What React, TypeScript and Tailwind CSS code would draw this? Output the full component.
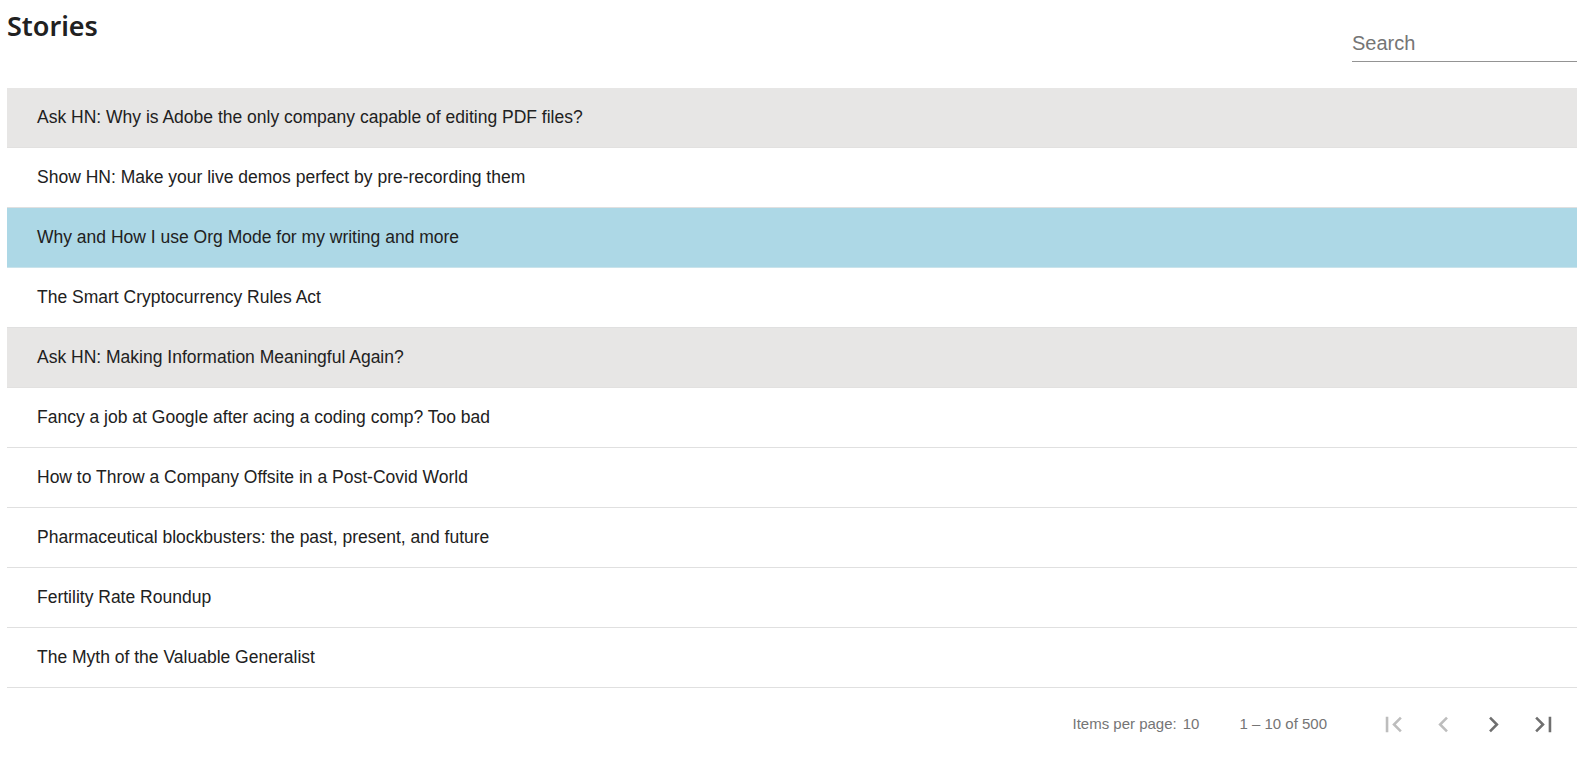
import React from "react";

const stories = [
  { t: "Ask HN: Why is Adobe the only company capable of editing PDF files?", bg: "gray" },
  { t: "Show HN: Make your live demos perfect by pre-recording them", bg: "white" },
  { t: "Why and How I use Org Mode for my writing and more", bg: "blue" },
  { t: "The Smart Cryptocurrency Rules Act", bg: "white" },
  { t: "Ask HN: Making Information Meaningful Again?", bg: "gray" },
  { t: "Fancy a job at Google after acing a coding comp? Too bad", bg: "white" },
  { t: "How to Throw a Company Offsite in a Post-Covid World", bg: "white" },
  { t: "Pharmaceutical blockbusters: the past, present, and future", bg: "white" },
  { t: "Fertility Rate Roundup", bg: "white" },
  { t: "The Myth of the Valuable Generalist", bg: "white" },
];

function Icon({ d, color }: { d: string; color: string }) {
  return (
    <svg width="31" height="31" viewBox="0 0 24 24" fill={color}>
      <path d={d} />
    </svg>
  );
}

export default function App() {
  return (
    <div className="pl-[7px] pr-[12px] bg-white min-h-[775px]" style={{ fontFamily: '"Liberation Sans", Arial, sans-serif' }}>
      <div className="flex justify-between items-start h-[88px]">
        <h1
          className="text-[27px] font-semibold text-[#212121] leading-none pt-[12px]"
          style={{ fontFamily: '"Noto Sans", sans-serif' }}
        >
          Stories
        </h1>
        <div className="w-[225px] mt-[26px]">
          <input
            placeholder="Search"
            className="w-full h-[36px] text-[20px] text-[#212121] placeholder:text-[#757575] border-b border-[#949494] outline-none bg-transparent"
          />
        </div>
      </div>
      <div>
        {stories.map((s, i) => (
          <div
            key={i}
            className={
              "h-[60px] flex items-center pl-[30px] border-b text-[17.5px] text-[#212121] " +
              (s.bg === "gray"
                ? "bg-[#e7e6e5] border-[#e2e1e0]"
                : s.bg === "blue"
                ? "bg-[#add8e6] border-[#c9e3eb]"
                : "bg-white border-[#e0e0e0]")
            }
          >
            {s.t}
          </div>
        ))}
      </div>
      <div className="flex justify-end items-center h-[72px] text-[15px] text-[#757575]">
        <span>Items per page:</span>
        <span className="ml-[6px]">10</span>
        <span className="ml-[40px]">1 – 10 of 500</span>
        <div className="flex ml-[41px] mr-[9px]">
          <button className="w-[50px] h-[44px] flex items-center justify-center">
            <Icon color="#bdbdbd" d="M18.41 16.59L13.82 12l4.59-4.59L17 6l-6 6 6 6zM6 6h2v12H6z" />
          </button>
          <button className="w-[50px] h-[44px] flex items-center justify-center">
            <Icon color="#bdbdbd" d="M15.41 7.41L14 6l-6 6 6 6 1.41-1.41L10.83 12z" />
          </button>
          <button className="w-[50px] h-[44px] flex items-center justify-center">
            <Icon color="#6f6f6f" d="M10 6L8.59 7.41 13.17 12l-4.58 4.59L10 18l6-6z" />
          </button>
          <button className="w-[50px] h-[44px] flex items-center justify-center">
            <Icon color="#6f6f6f" d="M5.59 7.41L10.18 12l-4.59 4.59L7 18l6-6-6-6zM16 6h2v12h-2z" />
          </button>
        </div>
      </div>
    </div>
  );
}
